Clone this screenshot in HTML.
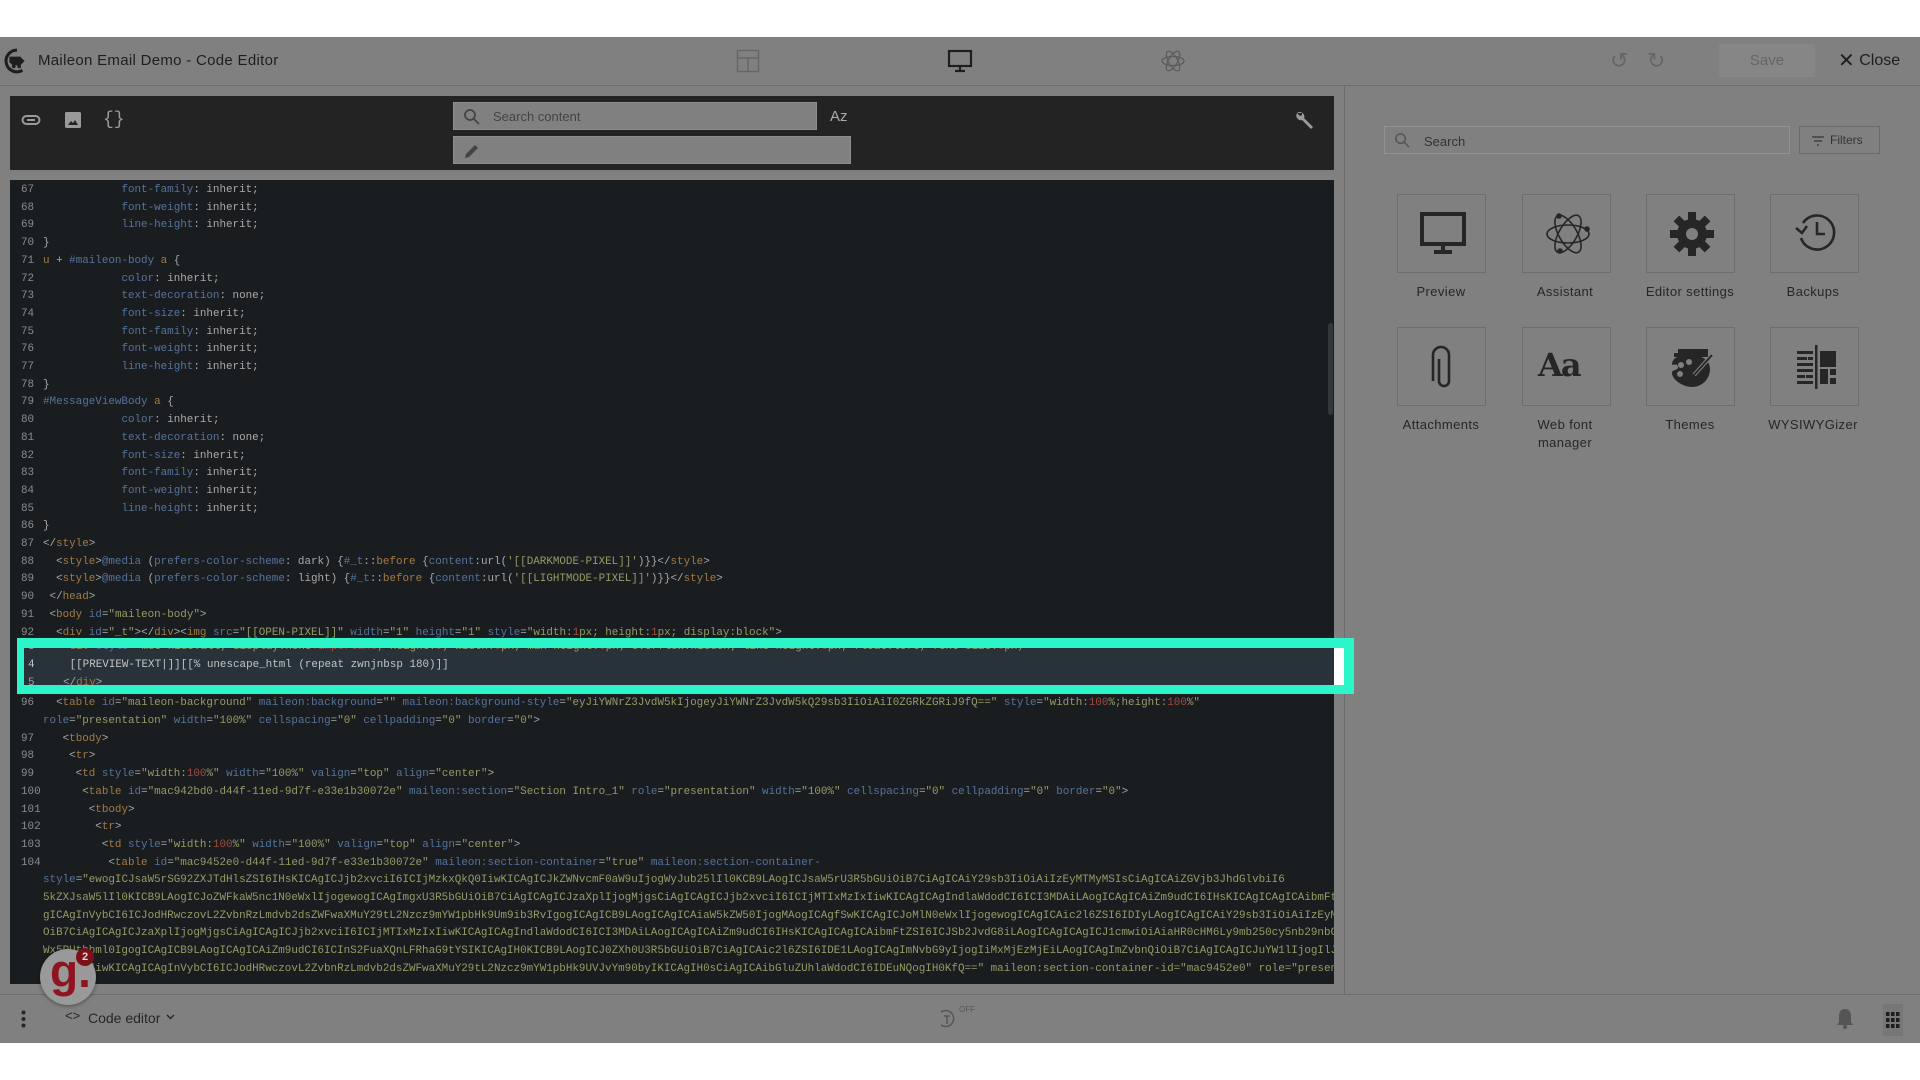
<!DOCTYPE html>
<html><head><meta charset="utf-8">
<style>
*{margin:0;padding:0;box-sizing:border-box}
body{width:1920px;height:1080px;overflow:hidden;background:#fff;font-family:"Liberation Sans",sans-serif;position:relative}
.abs{position:absolute}
#hdr{left:0;top:37px;width:1920px;height:49px;background:#808080;border-bottom:1px solid #6c6c6c}
#main{left:0;top:86px;width:1920px;height:908px;background:#808080}
#bot{left:0;top:994px;width:1920px;height:49px;background:#808080;border-top:1px solid #6c6c6c}
#tool{left:10px;top:96px;width:1324px;height:74px;background:#232323}
#code{left:10px;top:180px;width:1324px;height:804px;background:#1a1d20;overflow:hidden}
#inner{position:absolute;left:0;top:2px;width:100%;height:100%}
.ln{position:absolute;left:0;height:17.7px;line-height:17.7px;font-family:"Liberation Mono",monospace;font-size:10.9px;white-space:pre;color:#a9a9a9}
.ln .no{position:absolute;left:11px;color:#8a8d90}
.ln .tx{position:absolute;left:33px}
.t{color:#a27a43}.a{color:#55739b}.s{color:#959b66}.n{color:#a24a3e}.p{color:#a9a9a9}
.box{left:17px;top:638px;width:1337px;height:56px;border:10px solid #2cf5c9;border-left-width:7px;border-bottom-width:9px;background:#283238;overflow:hidden}
.tile{position:absolute;width:89px;height:79px;border:1px solid #6e6e6e}
.lab{position:absolute;width:124px;text-align:center;font-size:13px;color:#262626;letter-spacing:.4px;line-height:18px}
.inp{position:absolute;background:#808080;border:1px solid #8e8e8e}
</style></head><body>
<div class="abs" id="hdr">
  <svg class="abs" style="left:4px;top:11px" width="26" height="26" viewBox="0 0 24 24"><path d="M12 2a10 10 0 1 0 5 18.6" stroke="#1e1e1e" stroke-width="2.8" fill="none"/><path d="M5 8h10l4 4-4 4H8l-3-3z" fill="#1e1e1e"/><circle cx="9" cy="17" r="1.7" fill="#1e1e1e"/><circle cx="14" cy="17" r="1.7" fill="#1e1e1e"/></svg>
  <div class="abs" style="left:38px;top:15px;font-size:15px;color:#1e1e1e;letter-spacing:.3px">Maileon Email Demo - Code Editor</div>
  <svg class="abs" style="left:736px;top:12px" width="24" height="24" viewBox="0 0 24 24"><rect x="1.5" y="1.5" width="21" height="21" fill="none" stroke="#666" stroke-width="1.5"/><path d="M1.5 9h21M12 9v13.5" stroke="#666" stroke-width="1.5"/></svg>
  <svg class="abs" style="left:947px;top:11px" width="26" height="26" viewBox="0 0 26 26"><rect x="2" y="3" width="22" height="15" fill="none" stroke="#1e1e1e" stroke-width="2.2"/><path d="M13 18v4M8 23h10" stroke="#1e1e1e" stroke-width="2.2"/></svg>
  <svg class="abs" style="left:1160px;top:11px" width="26" height="26" viewBox="0 0 26 26" fill="none" stroke="#5a5a5a" stroke-width="1.2"><ellipse cx="13" cy="13" rx="11" ry="4.5"/><ellipse cx="13" cy="13" rx="11" ry="4.5" transform="rotate(60 13 13)"/><ellipse cx="13" cy="13" rx="11" ry="4.5" transform="rotate(120 13 13)"/></svg>
  <div class="abs" style="left:1610px;top:11px;font-size:22px;color:#666">&#x21BA;</div>
  <div class="abs" style="left:1647px;top:11px;font-size:22px;color:#666">&#x21BB;</div>
  <div class="abs" style="left:1719px;top:7px;width:96px;height:33px;background:#868686;color:#666;font-size:15px;text-align:center;line-height:33px">Save</div>
  <div class="abs" style="left:1838px;top:11px;font-size:16px;color:#1e1e1e"><span style="font-size:20px;vertical-align:-2px">&#x2715;</span> Close</div>
</div>
<div class="abs" id="main"></div>
<div class="abs" style="left:1344px;top:86px;width:1px;height:908px;background:#6c6c6c"></div>
<div class="abs" id="tool">
  <svg class="abs" style="left:11px;top:16px" width="20" height="16" viewBox="0 0 20 16" fill="none" stroke="#9a9a9a" stroke-width="2"><rect x="1.5" y="4" width="17" height="8" rx="4"/><path d="M6 8h8"/></svg>
  <svg class="abs" style="left:54px;top:15px" width="18" height="18" viewBox="0 0 18 18"><rect x="1" y="1" width="16" height="16" rx="1.5" fill="#9a9a9a"/><path d="M4 14l3-4 2 2 2-3 3 5z" fill="#232323"/></svg>
  <div class="abs" style="left:93px;top:14px;font-size:18px;color:#9a9a9a;font-family:'Liberation Mono',monospace">{}</div>
  <div class="inp" style="left:443px;top:6px;width:364px;height:28px">
    <svg class="abs" style="left:9px;top:5px" width="18" height="18" viewBox="0 0 18 18" fill="none" stroke="#444" stroke-width="1.8"><circle cx="7" cy="7" r="5"/><path d="M11 11l5 5"/></svg>
    <div class="abs" style="left:39px;top:6px;font-size:13px;color:#444">Search content</div>
  </div>
  <div class="abs" style="left:820px;top:12px;font-size:15px;color:#aaa">Az</div>
  <div class="inp" style="left:443px;top:40px;width:398px;height:28px">
    <svg class="abs" style="left:9px;top:5px" width="18" height="18" viewBox="0 0 18 18"><path d="M2 16l1-4 9-9 3 3-9 9z" fill="#444"/></svg>
  </div>
  <svg class="abs" style="left:1284px;top:14px" width="22" height="22" viewBox="0 0 22 22"><path d="M3 3c2-2 6-1 7 2 1 2 0 3 0 3l9 9-2 2-9-9s-2 1-4-1C2 8 2 5 3 3l3 3 2-1 0-2z" fill="#9a9a9a"/></svg>
</div>
<div class="abs" id="code"><div id="inner">
<div class="ln" style="top:0"><span class="no">67</span><span class="tx">            <span class="a">font-family</span>: inherit;</span></div>
<div class="ln" style="top:17.7px"><span class="no">68</span><span class="tx">            <span class="a">font-weight</span>: inherit;</span></div>
<div class="ln" style="top:35.4px"><span class="no">69</span><span class="tx">            <span class="a">line-height</span>: inherit;</span></div>
<div class="ln" style="top:53.1px"><span class="no">70</span><span class="tx">}</span></div>
<div class="ln" style="top:70.8px"><span class="no">71</span><span class="tx"><span class="t">u</span> + <span class="a">#maileon-body</span> <span class="t">a</span> {</span></div>
<div class="ln" style="top:88.5px"><span class="no">72</span><span class="tx">            <span class="a">color</span>: inherit;</span></div>
<div class="ln" style="top:106.2px"><span class="no">73</span><span class="tx">            <span class="a">text-decoration</span>: none;</span></div>
<div class="ln" style="top:123.9px"><span class="no">74</span><span class="tx">            <span class="a">font-size</span>: inherit;</span></div>
<div class="ln" style="top:141.6px"><span class="no">75</span><span class="tx">            <span class="a">font-family</span>: inherit;</span></div>
<div class="ln" style="top:159.3px"><span class="no">76</span><span class="tx">            <span class="a">font-weight</span>: inherit;</span></div>
<div class="ln" style="top:177px"><span class="no">77</span><span class="tx">            <span class="a">line-height</span>: inherit;</span></div>
<div class="ln" style="top:194.7px"><span class="no">78</span><span class="tx">}</span></div>
<div class="ln" style="top:212.4px"><span class="no">79</span><span class="tx"><span class="a">#MessageViewBody</span> <span class="t">a</span> {</span></div>
<div class="ln" style="top:230.1px"><span class="no">80</span><span class="tx">            <span class="a">color</span>: inherit;</span></div>
<div class="ln" style="top:247.8px"><span class="no">81</span><span class="tx">            <span class="a">text-decoration</span>: none;</span></div>
<div class="ln" style="top:265.5px"><span class="no">82</span><span class="tx">            <span class="a">font-size</span>: inherit;</span></div>
<div class="ln" style="top:283.2px"><span class="no">83</span><span class="tx">            <span class="a">font-family</span>: inherit;</span></div>
<div class="ln" style="top:300.9px"><span class="no">84</span><span class="tx">            <span class="a">font-weight</span>: inherit;</span></div>
<div class="ln" style="top:318.6px"><span class="no">85</span><span class="tx">            <span class="a">line-height</span>: inherit;</span></div>
<div class="ln" style="top:336.3px"><span class="no">86</span><span class="tx">}</span></div>
<div class="ln" style="top:354px"><span class="no">87</span><span class="tx">&lt;/<span class="t">style</span>&gt;</span></div>
<div class="ln" style="top:371.7px"><span class="no">88</span><span class="tx">  &lt;<span class="t">style</span>&gt;<span class="a">@media</span> (<span class="a">prefers-color-scheme</span>: dark) {<span class="a">#_t</span>::<span class="t">before</span> {<span class="a">content</span>:url(<span class="s">'[[DARKMODE-PIXEL]]'</span>)}}&lt;/<span class="t">style</span>&gt;</span></div>
<div class="ln" style="top:389.4px"><span class="no">89</span><span class="tx">  &lt;<span class="t">style</span>&gt;<span class="a">@media</span> (<span class="a">prefers-color-scheme</span>: light) {<span class="a">#_t</span>::<span class="t">before</span> {<span class="a">content</span>:url(<span class="s">'[[LIGHTMODE-PIXEL]]'</span>)}}&lt;/<span class="t">style</span>&gt;</span></div>
<div class="ln" style="top:407.1px"><span class="no">90</span><span class="tx"> &lt;/<span class="t">head</span>&gt;</span></div>
<div class="ln" style="top:424.8px"><span class="no">91</span><span class="tx"> &lt;<span class="t">body</span> <span class="a">id</span>=<span class="s">"maileon-body"</span>&gt;</span></div>
<div class="ln" style="top:442.5px"><span class="no">92</span><span class="tx">  &lt;<span class="t">div</span> <span class="a">id</span>=<span class="s">"_t"</span>&gt;&lt;/<span class="t">div</span>&gt;&lt;<span class="t">img</span> <span class="a">src</span>=<span class="s">"[[OPEN-PIXEL]]"</span> <span class="a">width</span>=<span class="s">"1"</span> <span class="a">height</span>=<span class="s">"1"</span> <span class="a">style</span>=<span class="s">"width:<span class="n">1</span>px; height:<span class="n">1</span>px; display:block"</span>&gt;</span></div>
<div class="ln" style="top:513.3px"><span class="no">96</span><span class="tx">  &lt;<span class="t">table</span> <span class="a">id</span>=<span class="s">"maileon-background"</span> <span class="a">maileon:background</span>=<span class="s">""</span> <span class="a">maileon:background-style</span>=<span class="s">"eyJiYWNrZ3JvdW5kIjogeyJiYWNrZ3JvdW5kQ29sb3IiOiAiI0ZGRkZGRiJ9fQ=="</span> <span class="a">style</span>=<span class="s">"width:<span class="n">100</span>%;height:<span class="n">100</span>%"</span></span></div>
<div class="ln" style="top:531px"><span class="tx"><span class="a">role</span>=<span class="s">"presentation"</span> <span class="a">width</span>=<span class="s">"100%"</span> <span class="a">cellspacing</span>=<span class="s">"0"</span> <span class="a">cellpadding</span>=<span class="s">"0"</span> <span class="a">border</span>=<span class="s">"0"</span>&gt;</span></div>
<div class="ln" style="top:548.7px"><span class="no">97</span><span class="tx">   &lt;<span class="t">tbody</span>&gt;</span></div>
<div class="ln" style="top:566.4px"><span class="no">98</span><span class="tx">    &lt;<span class="t">tr</span>&gt;</span></div>
<div class="ln" style="top:584.1px"><span class="no">99</span><span class="tx">     &lt;<span class="t">td</span> <span class="a">style</span>=<span class="s">"width:<span class="n">100</span>%"</span> <span class="a">width</span>=<span class="s">"100%"</span> <span class="a">valign</span>=<span class="s">"top"</span> <span class="a">align</span>=<span class="s">"center"</span>&gt;</span></div>
<div class="ln" style="top:601.8px"><span class="no">100</span><span class="tx">      &lt;<span class="t">table</span> <span class="a">id</span>=<span class="s">"mac942bd0-d44f-11ed-9d7f-e33e1b30072e"</span> <span class="a">maileon:section</span>=<span class="s">"Section Intro_1"</span> <span class="a">role</span>=<span class="s">"presentation"</span> <span class="a">width</span>=<span class="s">"100%"</span> <span class="a">cellspacing</span>=<span class="s">"0"</span> <span class="a">cellpadding</span>=<span class="s">"0"</span> <span class="a">border</span>=<span class="s">"0"</span>&gt;</span></div>
<div class="ln" style="top:619.5px"><span class="no">101</span><span class="tx">       &lt;<span class="t">tbody</span>&gt;</span></div>
<div class="ln" style="top:637.2px"><span class="no">102</span><span class="tx">        &lt;<span class="t">tr</span>&gt;</span></div>
<div class="ln" style="top:654.9px"><span class="no">103</span><span class="tx">         &lt;<span class="t">td</span> <span class="a">style</span>=<span class="s">"width:<span class="n">100</span>%"</span> <span class="a">width</span>=<span class="s">"100%"</span> <span class="a">valign</span>=<span class="s">"top"</span> <span class="a">align</span>=<span class="s">"center"</span>&gt;</span></div>
<div class="ln" style="top:672.6px"><span class="no">104</span><span class="tx">          &lt;<span class="t">table</span> <span class="a">id</span>=<span class="s">"mac9452e0-d44f-11ed-9d7f-e33e1b30072e"</span> <span class="a">maileon:section-container</span>=<span class="s">"true"</span> <span class="a">maileon:section-container-</span></span></div>
<div class="ln" style="top:690.3px"><span class="tx"><span class="a">style</span>=<span class="s">"ewogICJsaW5rSG92ZXJTdHlsZSI6IHsKICAgICJjb2xvciI6ICIjMzkxQkQ0IiwKICAgICJkZWNvcmF0aW9uIjogWyJub25lIl0KCB9LAogICJsaW5rU3R5bGUiOiB7CiAgICAiY29sb3IiOiAiIzEyMTMyMSIsCiAgICAiZGVjb3JhdGlvbiI6</span></span></div>
<div class="ln" style="top:708px"><span class="tx"><span class="s">5kZXJsaW5lIl0KICB9LAogICJoZWFkaW5nc1N0eWxlIjogewogICAgImgxU3R5bGUiOiB7CiAgICAgICJzaXplIjogMjgsCiAgICAgICJjb2xvciI6ICIjMTIxMzIxIiwKICAgICAgIndlaWdodCI6ICI3MDAiLAogICAgICAiZm9udCI6IHsKICAgICAgICAibmFtZSI6ICJSb2JvdG</span></span></div>
<div class="ln" style="top:725.7px"><span class="tx"><span class="s">gICAgInVybCI6ICJodHRwczovL2ZvbnRzLmdvb2dsZWFwaXMuY29tL2Nzcz9mYW1pbHk9Um9ib3RvIgogICAgICB9LAogICAgICAiaW5kZW50IjogMAogICAgfSwKICAgICJoMlN0eWxlIjogewogICAgICAic2l6ZSI6IDIyLAogICAgICAiY29sb3IiOiAiIzEyMTMyMSIs</span></span></div>
<div class="ln" style="top:743.4px"><span class="tx"><span class="s">OiB7CiAgICAgICJzaXplIjogMjgsCiAgICAgICJjb2xvciI6ICIjMTIxMzIxIiwKICAgICAgIndlaWdodCI6ICI3MDAiLAogICAgICAiZm9udCI6IHsKICAgICAgICAibmFtZSI6ICJSb2JvdG8iLAogICAgICAgICJ1cmwiOiAiaHR0cHM6Ly9mb250cy5nb29nbGVhcGlz</span></span></div>
<div class="ln" style="top:761.1px"><span class="tx"><span class="s">Wx5PUthbml0IgogICAgICB9LAogICAgICAiZm9udCI6ICInS2FuaXQnLFRhaG9tYSIKICAgIH0KICB9LAogICJ0ZXh0U3R5bGUiOiB7CiAgICAic2l6ZSI6IDE1LAogICAgImNvbG9yIjogIiMxMjEzMjEiLAogICAgImZvbnQiOiB7CiAgICAgICJuYW1lIjogIlJvYm90bMtc2</span></span></div>
<div class="ln" style="top:778.8px"><span class="tx"><span class="s">WxvdG8nIiwKICAgICAgInVybCI6ICJodHRwczovL2ZvbnRzLmdvb2dsZWFwaXMuY29tL2Nzcz9mYW1pbHk9UVJvYm90byIKICAgIH0sCiAgICAibGluZUhlaWdodCI6IDEuNQogIH0KfQ==" maileon:section-container-id="mac9452e0" role="presentation"</span></span></div>
</div>
<div class="abs" style="left:1318px;top:143px;width:5px;height:92px;background:#33373b;border-radius:3px"></div>
</div>
<div class="abs box">
<div class="ln" style="top:-8.8px;left:-7px"><span class="no" style="left:11px;color:#9ca0a4">3</span><span class="tx" style="left:33px">  <span class="p">&lt;</span><span class="t">div</span> <span class="a">style</span>=<span class="s">"mso-hide:all; display:none<span class="n">!important</span>; height:<span class="n">0</span>; width:<span class="n">0</span>px; max-height:<span class="n">0</span>px; overflow:hidden; line-height:<span class="n">0</span>px; float:left; font-size:<span class="n">0</span>px;"</span>&gt;</span></div>
<div class="ln" style="top:8.9px;left:-7px;color:#c4c4c4"><span class="no" style="left:11px;color:#c4c4c4">4</span><span class="tx" style="left:33px">   [[PREVIEW-TEXT|]][[% unescape_html (repeat zwnjnbsp 180)]]</span></div>
<div class="ln" style="top:26.6px;left:-7px"><span class="no" style="left:11px;color:#9ca0a4">5</span><span class="tx" style="left:33px">  &lt;/<span class="t">div</span>&gt;</span></div>
<div class="abs" style="left:1310px;top:0;width:10px;height:37px;background:#fff"></div>
</div>
<!-- right panel -->
<div class="inp" style="left:1384px;top:126px;width:406px;height:28px;border-color:#929292">
  <svg class="abs" style="left:9px;top:5px" width="17" height="17" viewBox="0 0 18 18" fill="none" stroke="#555" stroke-width="1.6"><circle cx="7" cy="7" r="5"/><path d="M11 11l5 5"/></svg>
  <div class="abs" style="left:39px;top:7px;font-size:13px;color:#333">Search</div>
</div>
<div class="inp" style="left:1799px;top:126px;width:81px;height:28px;border-color:#6a6a6a">
  <svg class="abs" style="left:12px;top:9px" width="12" height="10" viewBox="0 0 12 10" stroke="#333" stroke-width="1.3"><path d="M0 1h12M2 5h8M5 9h2"/></svg>
  <div class="abs" style="left:30px;top:6px;font-size:12px;color:#333">Filters</div>
</div>
<div class="tile" style="left:1397px;top:194px"><svg class="abs" style="left:21px;top:15px" width="48" height="48" viewBox="0 0 48 48"><rect x="3" y="4" width="42" height="30" fill="none" stroke="#262626" stroke-width="4"/><rect x="22" y="34" width="4" height="6" fill="#262626"/><rect x="15" y="40" width="18" height="4" fill="#262626"/></svg></div>
<div class="tile" style="left:1522px;top:194px"><svg class="abs" style="left:21px;top:15px" width="48" height="48" viewBox="0 0 48 48" fill="none" stroke="#262626" stroke-width="1.6"><ellipse cx="24" cy="24" rx="21" ry="9"/><ellipse cx="24" cy="24" rx="21" ry="9" transform="rotate(60 24 24)"/><ellipse cx="24" cy="24" rx="21" ry="9" transform="rotate(120 24 24)"/><circle cx="15" cy="6" r="2" fill="#262626"/><circle cx="43" cy="19" r="2" fill="#262626"/><circle cx="16" cy="41" r="2" fill="#262626"/></svg></div>
<div class="tile" style="left:1646px;top:194px"><svg class="abs" style="left:21px;top:15px" width="48" height="48" viewBox="0 0 48 48"><g fill="#262626"><circle cx="24" cy="24" r="15"/><rect x="20" y="2" width="8" height="44"/><rect x="2" y="20" width="44" height="8"/><rect x="20" y="2" width="8" height="44" transform="rotate(45 24 24)"/><rect x="20" y="2" width="8" height="44" transform="rotate(-45 24 24)"/></g><circle cx="24" cy="24" r="6" fill="#808080"/></svg></div>
<div class="tile" style="left:1770px;top:194px"><svg class="abs" style="left:21px;top:15px" width="48" height="48" viewBox="0 0 48 48" fill="none" stroke="#262626" stroke-width="2.6"><path d="M9 28A17 17 0 1 0 11 13"/><path d="M4 18l6 5 5-7" /><path d="M25 12v12h8"/></svg></div>
<div class="lab" style="left:1379px;top:283px">Preview</div>
<div class="lab" style="left:1503px;top:283px">Assistant</div>
<div class="lab" style="left:1628px;top:283px">Editor settings</div>
<div class="lab" style="left:1751px;top:283px">Backups</div>
<div class="tile" style="left:1397px;top:327px"><svg class="abs" style="left:21px;top:15px" width="48" height="48" viewBox="0 0 48 48" fill="none" stroke="#262626" stroke-width="2.6"><path d="M20 16v22a5 5 0 0 0 10 0V12a8 8 0 0 0-16 0v26"/></svg></div>
<div class="tile" style="left:1522px;top:327px"><div class="abs" style="left:15px;top:18px;font-family:'DejaVu Serif',serif;font-weight:bold;font-size:32px;color:#262626;letter-spacing:-2px">Aa</div></div>
<div class="tile" style="left:1646px;top:327px"><svg class="abs" style="left:21px;top:15px" width="48" height="48" viewBox="0 0 48 48"><path d="M10 6h30v4H10zM6 10h34v4H6z" fill="#262626"/><path d="M4 22c0-8 8-10 18-10s20 4 20 14-8 18-18 18S4 36 4 30c0-4 6-2 6-6s-6-2-6-2z" fill="#262626"/><circle cx="13" cy="22" r="3" fill="#808080"/><circle cx="21" cy="19" r="3" fill="#808080"/><circle cx="12" cy="31" r="3" fill="#808080"/><path d="M44 12L26 32" stroke="#808080" stroke-width="4"/><path d="M44 12L26 32" stroke="#262626" stroke-width="2"/></svg></div>
<div class="tile" style="left:1770px;top:327px"><svg class="abs" style="left:21px;top:15px" width="48" height="48" viewBox="0 0 48 48" fill="#262626"><rect x="23" y="2" width="2.5" height="44"/><rect x="5" y="8" width="16" height="3"/><rect x="5" y="14" width="10" height="3"/><rect x="16" y="14" width="5" height="3"/><rect x="5" y="20" width="16" height="3"/><rect x="5" y="26" width="16" height="3"/><rect x="5" y="32" width="8" height="3"/><rect x="14" y="32" width="7" height="3"/><rect x="5" y="38" width="16" height="3"/><rect x="28" y="8" width="16" height="16"/><rect x="28" y="26" width="8" height="15"/><rect x="38" y="26" width="6" height="6"/><rect x="38" y="35" width="6" height="6"/></svg></div>
<div class="lab" style="left:1379px;top:416px">Attachments</div>
<div class="lab" style="left:1503px;top:416px">Web font<br>manager</div>
<div class="lab" style="left:1628px;top:416px">Themes</div>
<div class="lab" style="left:1751px;top:416px">WYSIWYGizer</div>
<!-- bottom -->
<div class="abs" id="bot">
  <svg class="abs" style="left:21px;top:15px" width="5" height="18" viewBox="0 0 5 18" fill="#262626"><circle cx="2.5" cy="2.5" r="2"/><circle cx="2.5" cy="9" r="2"/><circle cx="2.5" cy="15.5" r="2"/></svg>
  <div class="abs" style="left:65px;top:13px;font-size:13px;color:#262626">&lt;&gt;</div>
  <div class="abs" style="left:88px;top:15px;font-size:14px;color:#262626">Code editor</div>
  <svg class="abs" style="left:166px;top:19px" width="9" height="6" viewBox="0 0 9 6" fill="none" stroke="#262626" stroke-width="1.4"><path d="M1 1l3.5 3.5L8 1"/></svg>
  <svg class="abs" style="left:937px;top:13px" width="20" height="22" viewBox="0 0 20 22" fill="none" stroke="#555" stroke-width="1.5"><path d="M4 4A8 8 0 1 1 4 17"/><path d="M7 8h6M10 8v8"/></svg>
  <div class="abs" style="left:959px;top:10px;font-size:8px;color:#555">OFF</div>
  <svg class="abs" style="left:1836px;top:13px" width="18" height="22" viewBox="0 0 18 22" fill="#555"><path d="M9 1c-4 0-6 3-6 7v6l-2 3h16l-2-3V8c0-4-2-7-6-7z"/><circle cx="9" cy="19" r="2"/></svg>
  <div class="abs" style="left:1883px;top:9px;width:20px;height:32px;background:#777"></div>
  <svg class="abs" style="left:1886px;top:17px" width="14" height="16" viewBox="0 0 14 16" fill="#1e1e1e"><rect x="0" y="0" width="3.5" height="4"/><rect x="5" y="0" width="3.5" height="4"/><rect x="10" y="0" width="3.5" height="4"/><rect x="0" y="6" width="3.5" height="4"/><rect x="5" y="6" width="3.5" height="4"/><rect x="10" y="6" width="3.5" height="4"/><rect x="0" y="12" width="3.5" height="4"/><rect x="5" y="12" width="3.5" height="4"/><rect x="10" y="12" width="3.5" height="4"/></svg>
</div>
<div class="abs" style="left:40px;top:949px;width:56px;height:56px;border-radius:50%;background:#999;box-shadow:0 1px 4px rgba(0,0,0,.4)"></div>
<div class="abs" style="left:50px;top:944px;font-size:46px;font-weight:bold;color:#8e1520;font-family:'Liberation Sans',sans-serif">g.</div>
<div class="abs" style="left:76px;top:948px;width:18px;height:18px;border-radius:50%;background:#7a1018;color:#ddd;font-size:11px;font-weight:bold;text-align:center;line-height:18px">2</div>
</body></html>
